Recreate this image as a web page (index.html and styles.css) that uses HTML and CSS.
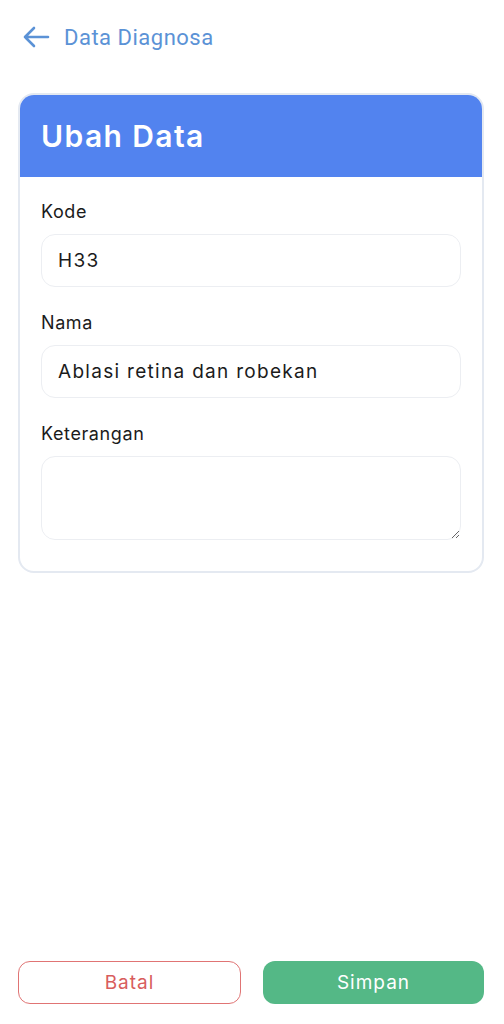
FILE: index.html
```html
<!DOCTYPE html>
<html lang="id">
<head>
    <meta charset="UTF-8">
    <meta name="viewport" content="width=device-width, initial-scale=1.0">
    <title>Data Diagnosa</title>
    <link rel="stylesheet" href="styles.css">
</head>
<body>
<div class="page">
    <header class="topbar">
        <button class="topbar__back" type="button">
            <svg width="28" height="22" viewBox="0 0 28 22">
                <path d="M3 11H26M12 2L3 11L12 20" fill="none" stroke="#5b92d6" stroke-width="2.6" stroke-linecap="round" stroke-linejoin="round"/>
            </svg>
        </button>
        <h1 class="topbar__title">Data Diagnosa</h1>
    </header>

    <form class="card" name="editForm">
        <h2 class="card__title">Ubah Data</h2>
        <div class="card__body">
            <label class="field">
                <span class="field__label">Kode</span>
                <input type="text" name="kode" class="field__input" value="H33">
            </label>
            <label class="field">
                <span class="field__label">Nama</span>
                <input type="text" name="nama" class="field__input" value="Ablasi retina dan robekan">
            </label>
            <label class="field">
                <span class="field__label">Keterangan</span>
                <textarea name="keterangan" class="field__input field__input_area"></textarea>
            </label>
        </div>
    </form>

    <div class="actions">
        <button type="button" class="btn btn_cancel">Batal</button>
        <button type="submit" class="btn btn_save">Simpan</button>
    </div>
</div>
</body>
</html>
```

FILE: styles.css
```css
* {
    box-sizing: border-box;
}
body {
    margin: 0;
    background: #fff;
    font-family: "Inter", "Open Sans", sans-serif;
    color: #1b1b1b;
}
.page {
    display: flex;
    flex-direction: column;
    height: 1024px;
    padding: 0 20px 20px 18px;
}
.topbar {
    display: flex;
    align-items: center;
    gap: 14px;
    height: 74px;
    padding-left: 4px;
}
.topbar__back {
    display: flex;
    padding: 0;
    border: 0;
    background: none;
}
.topbar__title {
    margin: 0;
    font-family: "Roboto", sans-serif;
    font-size: 22px;
    font-weight: 400;
    letter-spacing: 0.5px;
    color: #5b92d6;
}
.card {
    margin-top: 19px;
    border: 2px solid #e4e9f1;
    border-radius: 16px;
    overflow: hidden;
}
.card__title {
    margin: 0;
    height: 82px;
    padding: 0 21px;
    display: flex;
    align-items: center;
    background: #5283ef;
    color: #fff;
    font-size: 30px;
    font-weight: 600;
    letter-spacing: 1.4px;
}
.card__body {
    display: flex;
    flex-direction: column;
    gap: 23px;
    padding: 22px 21px 31px;
}
.field {
    display: grid;
    gap: 10px;
}
.field__label {
    font-size: 18px;
    line-height: 25px;
    letter-spacing: 0.6px;
    color: #1b1b1b;
}
.field__input {
    height: 53px;
    padding: 0 16px;
    border: 1px solid #eceef2;
    border-radius: 14px;
    font-family: inherit;
    font-size: 19px;
    letter-spacing: 1.3px;
    color: #1b1b1b;
    background: #fff;
    outline: none;
}
.field__input_area {
    height: 84px;
    resize: vertical;
}
.actions {
    display: flex;
    gap: 22px;
    margin-top: auto;
}
.btn {
    flex: 1;
    height: 43px;
    border-radius: 12px;
    font-family: inherit;
    font-size: 19px;
    letter-spacing: 1px;
}
.btn_cancel {
    border: 1px solid #e07474;
    background: #fff;
    color: #d85d5d;
}
.btn_save {
    border: 0;
    background: #54b886;
    color: #fff;
}
```
